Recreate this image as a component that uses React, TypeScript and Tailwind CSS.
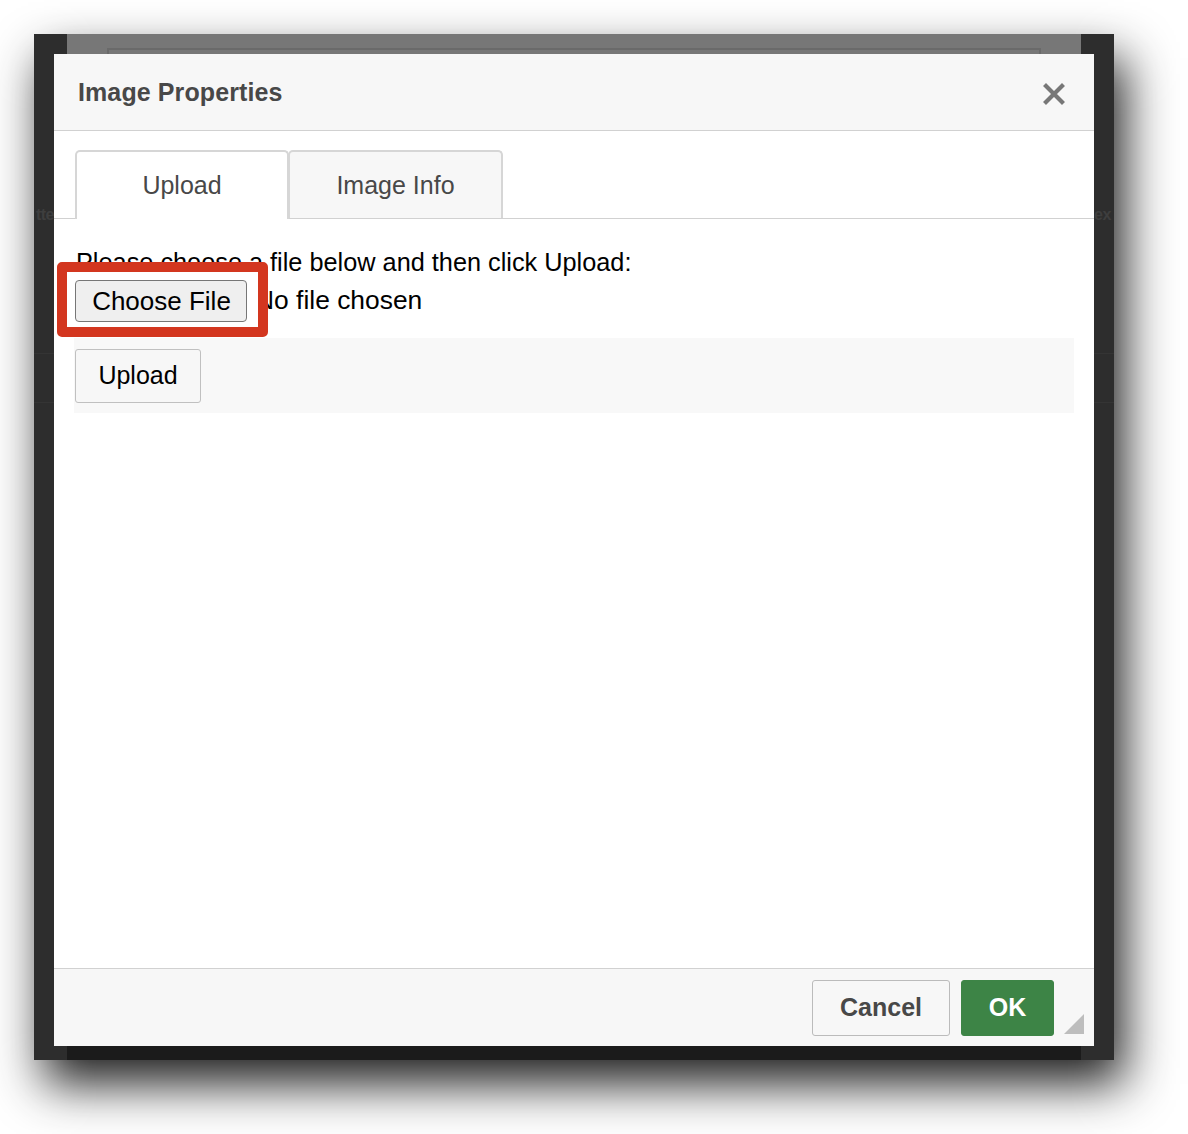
import React from "react";

const font = { fontFamily: '"Liberation Sans", Arial, sans-serif' };

function CloseIcon() {
  return (
    <svg width="22" height="22" viewBox="0 0 22 22" className="text-[#777]">
      <path d="M3 3 L19 19 M19 3 L3 19" stroke="currentColor" strokeWidth="4.2" strokeLinecap="square" />
    </svg>
  );
}

function SideStrip({ text, align }: { text: string; align: "left" | "right" }) {
  return (
    <div className="w-[20px] shrink-0 overflow-hidden pt-[151px]">
      <div
        className={
          "text-[16px] leading-[20px] font-bold tracking-[-0.5px] text-[#3e3e3e] whitespace-nowrap " +
          (align === "left" ? "flex justify-end" : "flex justify-start")
        }
      >
        {text}
      </div>
      <div className="mt-[128px] h-px bg-[#343434]" />
      <div className="mt-[48px] h-px bg-[#343434]" />
    </div>
  );
}

export default function App() {
  return (
    <div className="w-[1188px] h-[1134px] bg-white overflow-hidden pt-[34px] pl-[34px]" style={font}>
      <div className="w-[1080px] h-[1026px] bg-[#2d2d2d] flex flex-col shadow-[10px_24px_46px_rgba(0,0,0,0.88)]">
        {/* page behind the dialog */}
        <div className="h-[20px] mx-[33px] bg-[#777] pt-[14px] px-[40px] shrink-0">
          <div className="h-full border-t-2 border-x-2 border-[#6a6a6a]" />
        </div>

        <div className="flex flex-1 min-h-0">
          <SideStrip text="tte" align="left" />

          {/* dialog */}
          <div className="w-[1040px] h-[992px] bg-white flex flex-col">
            <div className="h-[77px] shrink-0 bg-[#f7f7f7] border-b border-[#d1d1d1] flex items-center justify-between pl-[24px] pr-[29px]">
              <h2 className="mt-px text-[25px] font-bold text-[#484848] tracking-[0.1px]">Image Properties</h2>
              <button className="mt-[3px]">
                <CloseIcon />
              </button>
            </div>

            <div className="flex-1 pt-[19px]">
              <div className="flex border-b border-[#d1d1d1] pl-[21px]">
                <div className="w-[214px] h-[69px] -mb-px pt-px bg-white border-2 border-b-0 border-[#d6d6d6] rounded-t-[5px] flex items-center justify-center text-[25px] text-[#484848]">
                  Upload
                </div>
                <div className="w-[215px] h-[68px] -ml-px pt-px bg-[#f7f7f7] border-2 border-b-0 border-[#d6d6d6] rounded-t-[5px] flex items-center justify-center text-[25px] text-[#484848]">
                  Image Info
                </div>
              </div>

              <div className="px-[20px]">
                <p className="mt-[29px] pl-[2px] text-[25.3px] leading-[29px] text-black">
                  Please choose a file below and then click Upload:
                </p>
                <div className="relative mt-[3px] flex items-center h-[42px]">
                  <div className="absolute z-10 left-[-17px] top-[-18px] w-[211px] h-[75px] bg-white border-[10px] border-[#d3361f] rounded-[5px]" />
                  <button className="relative z-20 ml-px w-[172px] h-[42px] bg-[#efefef] border-[1.5px] border-[#767676] rounded-[4px] text-[26px] text-black pl-[1px]">
                    Choose File
                  </button>
                  <span className="ml-[8px] text-[26.4px] text-black">No file chosen</span>
                </div>
                <div className="mt-[16px] bg-[#f8f8f8] pt-[11px] pb-[10px] px-px">
                  <button className="w-[126px] h-[54px] bg-[#f7f7f7] border-[1.5px] border-[#c0c0c0] rounded-[3px] text-[25px] text-black">
                    Upload
                  </button>
                </div>
              </div>
            </div>

            <div className="relative h-[78px] shrink-0 bg-[#f7f7f7] border-t border-[#d1d1d1] flex justify-end gap-[11px] pt-[11px] pr-[40px]">
              <button className="w-[138px] h-[56px] bg-[#f7f7f7] border-[1.5px] border-[#bbb] rounded-[3px] text-[25px] font-bold text-[#484848]">
                Cancel
              </button>
              <button className="w-[93px] h-[56px] bg-[#3d8446] border-[1.5px] border-[#3d8446] rounded-[3px] text-[25px] font-bold text-white">
                OK
              </button>
              <svg width="20" height="20" viewBox="0 0 20 20" className="absolute right-[10px] bottom-[12px]">
                <polygon points="20,0 20,20 0,20" fill="#bdbdbd" />
              </svg>
            </div>
          </div>

          <SideStrip text="ex" align="right" />
        </div>

        <div className="h-[14px] mx-[33px] bg-[#1b1b1b] shrink-0" />
      </div>
    </div>
  );
}
